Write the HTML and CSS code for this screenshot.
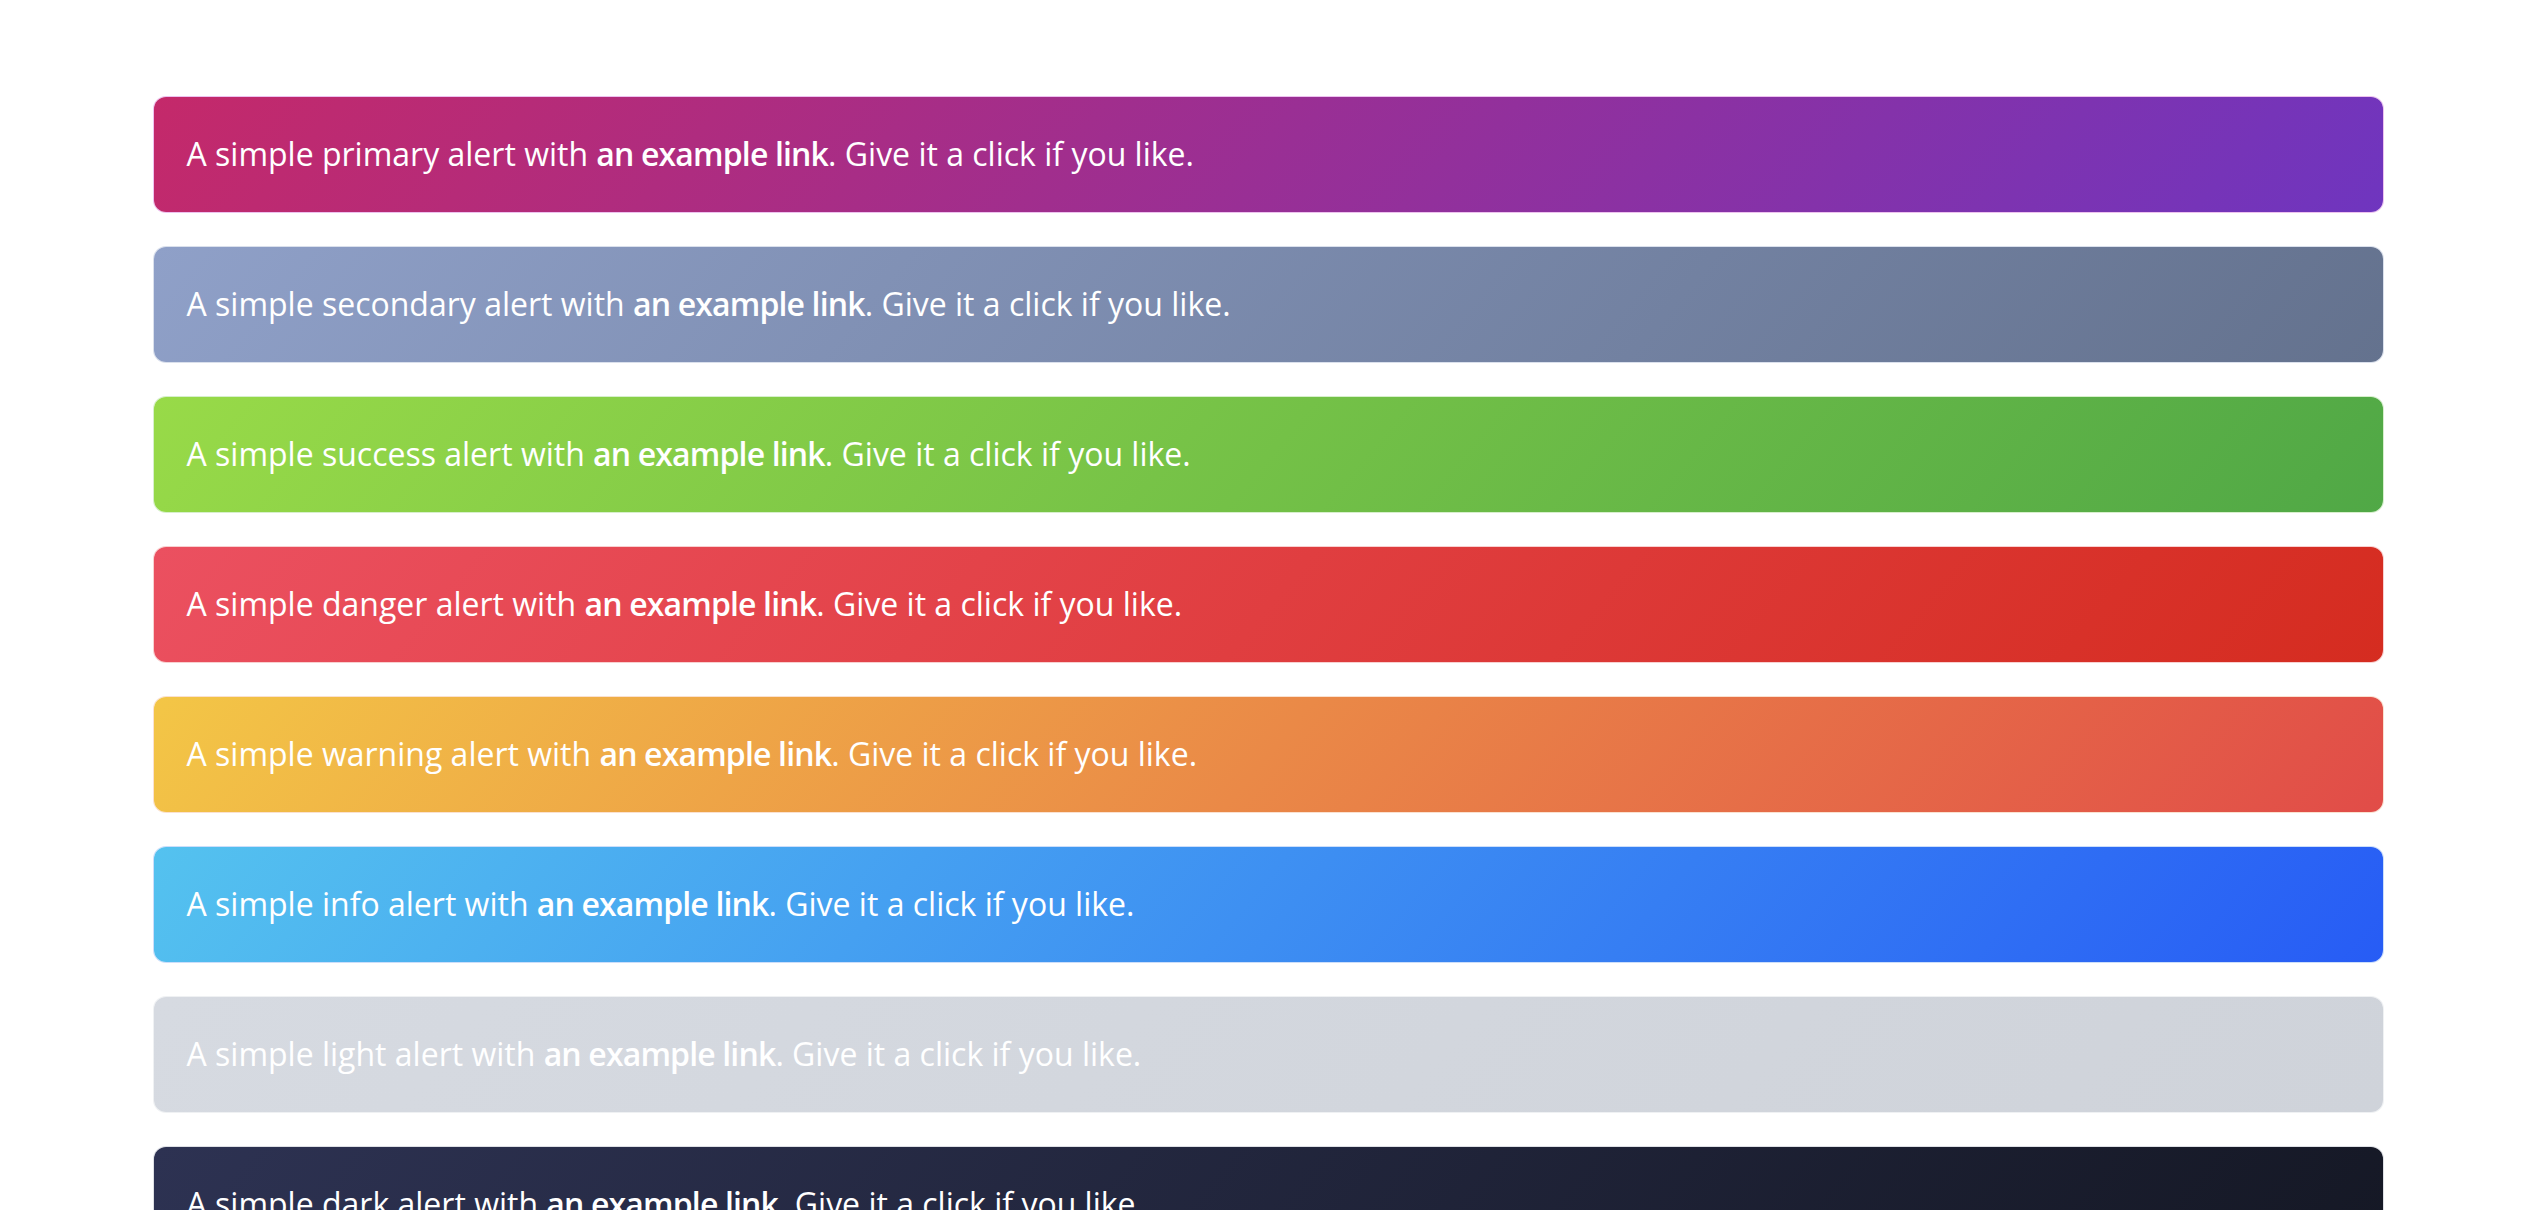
FILE: index.html
```html
<!DOCTYPE html>
<html lang="en">
<head>
<meta charset="utf-8">
<title>Alerts</title>
<link rel="stylesheet" href="styles.css">
</head>
<body>
<main class="alerts">
  <div class="alert alert-primary">A simple primary alert with <a href="#" class="alert-link">an example link</a>. Give it a click if you like.</div>
  <div class="alert alert-secondary">A simple secondary alert with <a href="#" class="alert-link">an example link</a>. Give it a click if you like.</div>
  <div class="alert alert-success">A simple success alert with <a href="#" class="alert-link">an example link</a>. Give it a click if you like.</div>
  <div class="alert alert-danger">A simple danger alert with <a href="#" class="alert-link">an example link</a>. Give it a click if you like.</div>
  <div class="alert alert-warning">A simple warning alert with <a href="#" class="alert-link">an example link</a>. Give it a click if you like.</div>
  <div class="alert alert-info">A simple info alert with <a href="#" class="alert-link">an example link</a>. Give it a click if you like.</div>
  <div class="alert alert-light">A simple light alert with <a href="#" class="alert-link">an example link</a>. Give it a click if you like.</div>
  <div class="alert alert-dark">A simple dark alert with <a href="#" class="alert-link">an example link</a>. Give it a click if you like.</div>
</main>
</body>
</html>
```
FILE: styles.css
```css
html, body {
  margin: 0;
  padding: 0;
  background: #ffffff;
}

body {
  font-family: "Open Sans", "Noto Sans", sans-serif;
  overflow: hidden;
  height: 1210px;
}

.alerts {
  width: 2229px;
  margin: 0 auto;
  padding-top: 97px;
  display: flex;
  flex-direction: column;
  gap: 35px;
}

.alert {
  box-sizing: border-box;
  height: 115px;
  padding: 34px 33px 36px;
  font-size: 32px;
  line-height: 45px;
  color: #ffffff;
  border-radius: 12px;
  white-space: nowrap;
}

.alert-link {
  color: #ffffff;
  font-weight: 600;
  letter-spacing: -0.85px;
  text-decoration: none;
}

.alert-primary {
  background-image: linear-gradient(310deg, #6f35bf 0%, #c4296a 100%);
  box-shadow: 0 0 0 1px rgba(214, 120, 220, 0.45);
}

.alert-secondary {
  background-image: linear-gradient(310deg, #64728e 0%, #8fa0c8 100%);
  box-shadow: 0 0 0 1px rgba(150, 165, 200, 0.35);
}

.alert-success {
  background-image: linear-gradient(310deg, #50a846 0%, #98da48 100%);
  box-shadow: 0 0 0 1px rgba(140, 210, 110, 0.35);
}

.alert-danger {
  background-image: linear-gradient(310deg, #d52c20 0%, #eb5060 100%);
  box-shadow: 0 0 0 1px rgba(235, 120, 120, 0.35);
}

.alert-warning {
  background-image: linear-gradient(310deg, #e14c48 0%, #f3c646 100%);
  box-shadow: 0 0 0 1px rgba(240, 170, 120, 0.35);
}

.alert-info {
  background-image: linear-gradient(310deg, #275cf5 0%, #54c2ef 100%);
  box-shadow: 0 0 0 1px rgba(110, 160, 240, 0.35);
}

.alert-light {
  background-image: linear-gradient(310deg, #cfd3da 0%, #d6dae1 100%);
  box-shadow: 0 0 0 1px rgba(210, 215, 222, 0.35);
}

.alert-dark {
  background-image: linear-gradient(310deg, #151825 0%, #2d3252 100%);
  box-shadow: 0 0 0 1px rgba(160, 165, 180, 0.35);
}
```
